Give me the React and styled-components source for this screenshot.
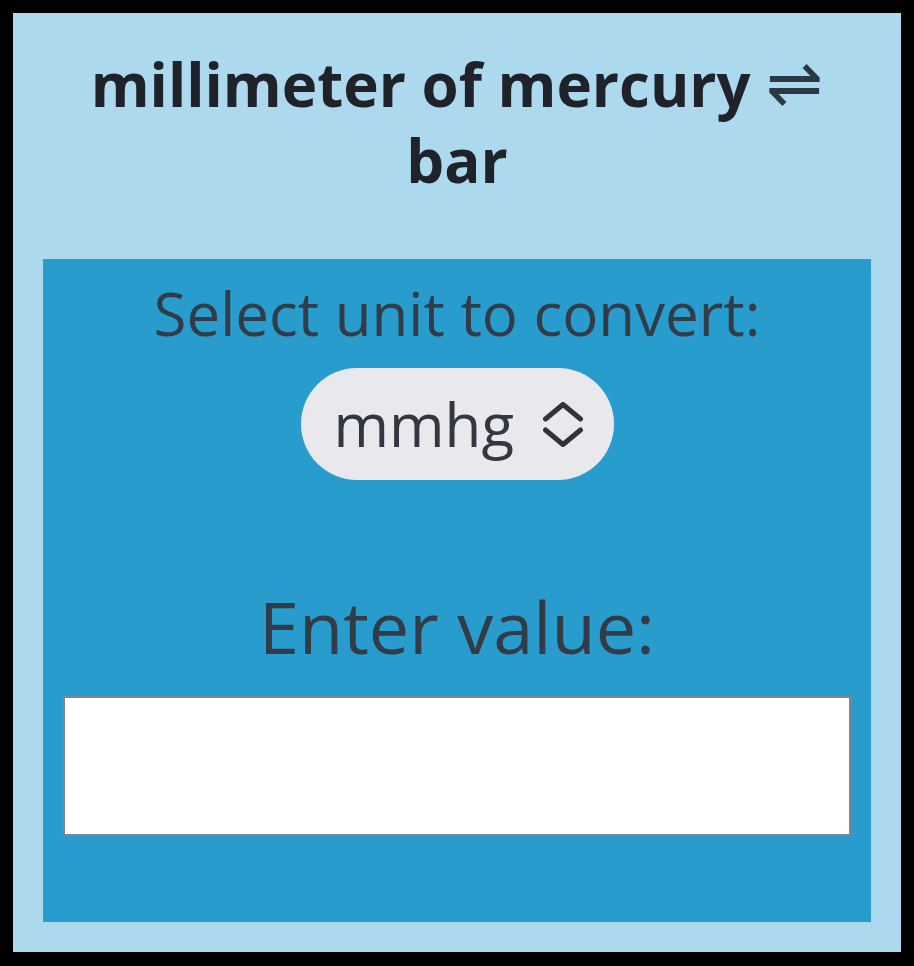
import React, { useState } from "react";
import styled, { createGlobalStyle } from "styled-components";

const GlobalStyle = createGlobalStyle`
  html, body {
    margin: 0;
    padding: 0;
    background: #000;
  }
  body {
    padding: 13px;
    font-family: "Open Sans", "Liberation Sans", sans-serif;
  }
  * { box-sizing: border-box; }
`;

// --- Layout ---

const Card = styled.main`
  background: #add9ee;
  min-height: 939px;
  padding: 33px 30px 30px;
  display: flex;
  flex-direction: column;
`;

const Title = styled.h1`
  margin: 0 auto 61px;
  max-width: 780px;
  text-align: center;
  font-size: 60px;
  line-height: 76px;
  font-weight: 700;
  color: #1f2229;
`;

const Arrows = styled.span`
  font-family: "DejaVu Sans", sans-serif;
  font-weight: 300;
  font-size: 68px;
  line-height: 0;
  color: #2b3947;
`;

const Panel = styled.section`
  flex: 1;
  background: #289dcd;
  padding: 17px 20px 30px;
  display: flex;
  flex-direction: column;
  align-items: center;
  color: #323c48;
`;

const Label = styled.label`
  font-size: ${(p) => p.$size}px;
  line-height: 1.25;
  font-weight: 400;
  text-align: center;
  margin-bottom: ${(p) => p.$gap}px;
`;

// --- Select ---

const SelectPill = styled.div`
  display: inline-flex;
  align-items: center;
  gap: 28px;
  height: 112px;
  padding: 0 31px 0 33px;
  border-radius: 56px;
  background: #e9e9ed;
  margin-bottom: 101px;
`;

const UnitSelect = styled.select`
  appearance: none;
  border: none;
  background: transparent;
  font-family: "Open Sans", "Liberation Sans", sans-serif;
  font-size: 60px;
  color: #333840;
  padding: 0;
  outline: none;
`;

const ValueInput = styled.input`
  width: 100%;
  height: 140px;
  border: 2px solid #7d8590;
  background: #fff;
  font-size: 48px;
  font-family: "Open Sans", "Liberation Sans", sans-serif;
  padding: 0 12px;
`;

function UpDownIcon() {
  return (
    <svg width="40" height="45" viewBox="0 0 40 45" fill="none">
      <path
        d="M2.5 17 L20 2.5 L37.5 17 M2.5 28 L20 42.5 L37.5 28"
        stroke="#2f333a"
        strokeWidth="5"
        strokeLinecap="round"
        strokeLinejoin="round"
      />
    </svg>
  );
}

export default function App() {
  const [unit, setUnit] = useState("mmhg");
  const [value, setValue] = useState("");

  return (
    <>
      <GlobalStyle />
      <Card>
        <Title>
          millimeter of mercury <Arrows>⇌</Arrows> bar
        </Title>
        <Panel>
          <Label $size={60} $gap={17} htmlFor="unit">
            Select unit to convert:
          </Label>
          <SelectPill>
            <UnitSelect id="unit" value={unit} onChange={(e) => setUnit(e.target.value)}>
              <option value="mmhg">mmhg</option>
              <option value="bar">bar</option>
            </UnitSelect>
            <UpDownIcon />
          </SelectPill>
          <Label $size={72} $gap={25} htmlFor="value">
            Enter value:
          </Label>
          <ValueInput id="value" type="text" value={value} onChange={(e) => setValue(e.target.value)} />
        </Panel>
      </Card>
    </>
  );
}
